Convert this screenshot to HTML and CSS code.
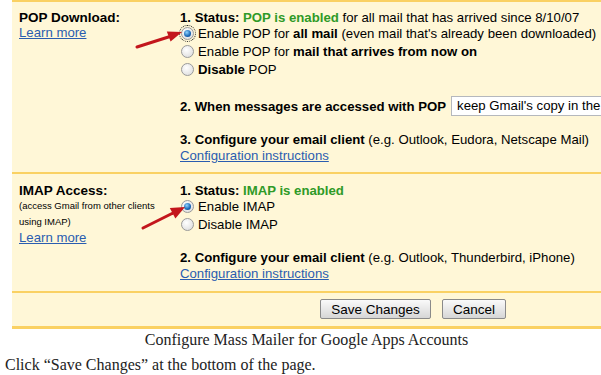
FILE: index.html
```html
<!DOCTYPE html>
<html lang="en">
<head>
    <meta charset="UTF-8">
    <title>Forwarding and POP/IMAP</title>
    <link rel="stylesheet" href="styles.css">
</head>
<body>
    <div class="frame">
        <div class="panel">
            <div class="row">
                <div class="label">
                    <div class="title">POP Download:</div>
                    <a href="#" class="link">Learn more</a>
                </div>
                <div class="options">
                    <div class="status"><b>1. Status:</b> <span class="on">POP is enabled</span> for all mail that has arrived since 8/10/07</div>
                    <div class="radio-row"><span class="radio checked focus"></span>Enable POP for <b>all mail</b> (even mail that's already been downloaded)</div>
                    <div class="radio-row"><span class="radio"></span>Enable POP for <b>mail that arrives from now on</b></div>
                    <div class="radio-row"><span class="radio"></span><b>Disable</b> POP</div>
                    <div class="access-row"><b>2. When messages are accessed with POP</b><div class="select">keep Gmail's copy in the</div></div>
                    <div class="step"><b>3. Configure your email client</b> (e.g. Outlook, Eudora, Netscape Mail)</div>
                    <a href="#" class="link">Configuration instructions</a>
                </div>
            </div>

            <div class="row imap">
                <div class="label">
                    <div class="title">IMAP Access:</div>
                    <div class="small">(access Gmail from other clients</div>
                    <div class="small">using IMAP)</div>
                    <a href="#" class="link">Learn more</a>
                </div>
                <div class="options">
                    <div class="status"><b>1. Status:</b> <span class="on">IMAP is enabled</span></div>
                    <div class="radio-row"><span class="radio checked"></span>Enable IMAP</div>
                    <div class="radio-row"><span class="radio"></span>Disable IMAP</div>
                    <div class="step"><b>2. Configure your email client</b> (e.g. Outlook, Thunderbird, iPhone)</div>
                    <a href="#" class="link">Configuration instructions</a>
                </div>
            </div>

            <div class="buttons">
                <button class="btn save">Save Changes</button>
                <button class="btn cancel">Cancel</button>
            </div>
        </div>

        <svg class="arrows" width="589" height="329" viewBox="12 0 589 329">
            <line x1="137" y1="47" x2="170" y2="36.5" stroke="#c3161c" stroke-width="3" stroke-linecap="round"/>
            <polygon points="182,32 170.6,41.5 166.8,31.5" fill="#c3161c"/>
            <line x1="143" y1="228" x2="173" y2="213" stroke="#c3161c" stroke-width="3" stroke-linecap="round"/>
            <polygon points="185,207 175.4,218.5 169.8,208" fill="#c3161c"/>
        </svg>
    </div>

    <p class="caption">Configure Mass Mailer for Google Apps Accounts</p>
    <p class="note">Click “Save Changes” at the bottom of the page.</p>
</body>
</html>
```

FILE: styles.css
```css
body { margin: 0; background: #fff; font-family: "Liberation Sans", Arial, sans-serif; font-size: 13.2px; color: #000; }
.frame { position: relative; margin-left: 12px; width: 589px; overflow: hidden; }
.panel { width: 660px; background: #fff7d7; border-top: 2px solid #fad163; border-bottom: 3px solid #fad163; }
.row { display: grid; grid-template-columns: 161px 1fr; padding: 8px 0 8px 7px; border-bottom: 2px solid #fad163; }
.row.imap { padding-top: 9px; padding-bottom: 9px; }
.label { display: flex; flex-direction: column; align-items: flex-start; line-height: 15px; }
.title { font-weight: bold; font-size: 13.5px; }
.small { font-size: 9.5px; line-height: 16px; }
.link { color: #2a5db0; text-decoration: underline; line-height: 15px; display: inline-block; }
.options { display: flex; flex-direction: column; align-items: flex-start; }
.status { line-height: 15px; white-space: nowrap; }
.on { color: #2f9a27; font-weight: bold; }
.radio-row { height: 18px; line-height: 18px; white-space: nowrap; }
.radio { position: relative; display: inline-block; vertical-align: -2px; width: 11px; height: 11px; margin: 0 4px 0 1px; border: 1px solid #9a9a9a; border-radius: 50%; background: radial-gradient(circle at 40% 35%, #ffffff, #d8d8d8); }
.radio.checked::after { content: ""; position: absolute; left: 2px; top: 2px; width: 7px; height: 7px; border-radius: 50%; background: radial-gradient(circle at 40% 35%, #8fd3ff, #1766b5 60%, #0b3f80); }
.radio.focus { outline: 1px dotted #222; outline-offset: 1px; }
.access-row { display: flex; align-items: center; margin-top: 17px; height: 20px; white-space: nowrap; }
.select { margin-left: 5px; height: 18px; line-height: 18px; padding: 0 5px; background: #fff; border: 1px solid #b5b8bd; }
.step { margin-top: 16px; line-height: 16px; white-space: nowrap; }
.row .options > .link { line-height: 16px; }
.buttons { display: flex; gap: 11px; padding: 6px 0 7px 308px; }
.btn { height: 20px; padding: 0; font-family: "Liberation Sans", Arial, sans-serif; font-size: 13.5px; color: #000; border: 1px solid #8a8a8a; border-radius: 2px; background: linear-gradient(#fafafa, #e8e8e8 50%, #d6d6d6); }
.save { width: 111px; }
.cancel { width: 64px; }
.arrows { position: absolute; left: 0; top: 0; pointer-events: none; }
.caption { margin: 2px 0 0 12px; font-family: "Liberation Serif", "Times New Roman", serif; font-size: 16px; text-align: center; line-height: 18px; color: #222; }
.note { margin: 7px 0 0 5px; font-family: "Liberation Serif", "Times New Roman", serif; font-size: 16px; line-height: 18px; color: #222; }
```
